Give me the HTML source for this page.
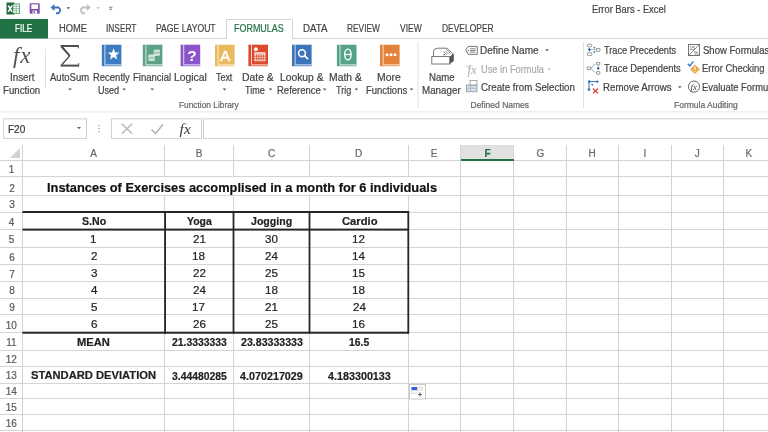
<!DOCTYPE html>
<html><head><meta charset="utf-8">
<style>
html,body{margin:0;padding:0;}
body{width:768px;height:432px;overflow:hidden;position:relative;background:#fff;filter:blur(0.35px);font-family:"Liberation Sans",sans-serif;}
.t{position:absolute;white-space:pre;line-height:1;transform-origin:0 0;-webkit-text-stroke:0.2px currentColor;}
svg{position:absolute;left:0;top:0;}
</style></head><body>
<svg width="768" height="432" viewBox="0 0 768 432">
<!-- tab row -->
<rect x="0" y="38" width="768" height="1" fill="#d4d4d4"/>
<rect x="0" y="19" width="48" height="19.5" fill="#217346"/>
<path d="M226.5 38.5 V19.5 H292.5 V38.5" fill="#fff" stroke="#d4d4d4" stroke-width="1"/>
<rect x="227" y="37" width="65" height="3" fill="#fff"/>
<!-- ribbon separators -->
<rect x="45" y="49" width="1" height="39" fill="#e1e1e1"/>
<rect x="417.5" y="42" width="1" height="66" fill="#e1e1e1"/>
<rect x="583" y="42" width="1" height="66" fill="#e1e1e1"/>
<rect x="0" y="111.4" width="768" height="1" fill="#e6e6e6"/>
<!-- formula bar -->
<rect x="3.5" y="118.8" width="83" height="19.6" fill="#fff" stroke="#d0d0d0"/>
<path d="M77 127 h4 l-2 2.2z" fill="#666"/>
<rect x="98.5" y="125" width="1.2" height="1.2" fill="#999"/><rect x="98.5" y="128" width="1.2" height="1.2" fill="#999"/><rect x="98.5" y="131" width="1.2" height="1.2" fill="#999"/>
<rect x="111.5" y="118.8" width="90" height="19.6" fill="#fff" stroke="#d0d0d0"/>
<rect x="203.5" y="118.8" width="570" height="19.6" fill="#fff" stroke="#d0d0d0"/>
<path d="M121.8 123.8 L132.2 133.8 M132.2 123.8 L121.8 133.8" stroke="#b8b8b8" stroke-width="1.5" fill="none"/>
<text x="179.6" y="134.4" font-family="Liberation Serif" font-style="italic" font-size="15.5" fill="#3a3a3a">fx</text>
<path d="M151.5 129.5 L155.5 133.5 L163 124.5" stroke="#b0b0b0" stroke-width="1.5" fill="none"/>
<!-- column header -->
<rect x="461" y="145" width="53" height="15" fill="#e1e1e1"/>
<rect x="0" y="160" width="768" height="1" fill="#d4d4d4"/>
<rect x="0" y="176" width="768" height="1" fill="#d4d4d4"/>
<rect x="0" y="195" width="768" height="1" fill="#d4d4d4"/>
<rect x="0" y="212" width="768" height="1" fill="#d4d4d4"/>
<rect x="0" y="229" width="768" height="1" fill="#d4d4d4"/>
<rect x="0" y="247" width="768" height="1" fill="#d4d4d4"/>
<rect x="0" y="264" width="768" height="1" fill="#d4d4d4"/>
<rect x="0" y="281" width="768" height="1" fill="#d4d4d4"/>
<rect x="0" y="298" width="768" height="1" fill="#d4d4d4"/>
<rect x="0" y="314" width="768" height="1" fill="#d4d4d4"/>
<rect x="0" y="332" width="768" height="1" fill="#d4d4d4"/>
<rect x="0" y="350" width="768" height="1" fill="#d4d4d4"/>
<rect x="0" y="366" width="768" height="1" fill="#d4d4d4"/>
<rect x="0" y="383" width="768" height="1" fill="#d4d4d4"/>
<rect x="0" y="398" width="768" height="1" fill="#d4d4d4"/>
<rect x="0" y="414" width="768" height="1" fill="#d4d4d4"/>
<rect x="0" y="430" width="768" height="1" fill="#d4d4d4"/>
<rect x="22" y="145" width="1" height="287" fill="#d4d4d4"/>
<rect x="164" y="145" width="1" height="32" fill="#d4d4d4"/>
<rect x="164" y="195" width="1" height="237" fill="#d4d4d4"/>
<rect x="233" y="145" width="1" height="32" fill="#d4d4d4"/>
<rect x="233" y="195" width="1" height="237" fill="#d4d4d4"/>
<rect x="309" y="145" width="1" height="32" fill="#d4d4d4"/>
<rect x="309" y="195" width="1" height="237" fill="#d4d4d4"/>
<rect x="408" y="145" width="1" height="32" fill="#d4d4d4"/>
<rect x="408" y="195" width="1" height="237" fill="#d4d4d4"/>
<rect x="460" y="145" width="1" height="287" fill="#d4d4d4"/>
<rect x="513" y="145" width="1" height="287" fill="#d4d4d4"/>
<rect x="566" y="145" width="1" height="287" fill="#d4d4d4"/>
<rect x="618" y="145" width="1" height="287" fill="#d4d4d4"/>
<rect x="671" y="145" width="1" height="287" fill="#d4d4d4"/>
<rect x="723" y="145" width="1" height="287" fill="#d4d4d4"/>
<rect x="461" y="159" width="53" height="2" fill="#217346"/>
<path d="M10 158 L20 158 L20 148 Z" fill="#d2d2d2"/>
<!-- table borders -->
<rect x="22.5" y="211" width="386.5" height="2" fill="#262626"/>
<rect x="22.5" y="228.6" width="386.5" height="2" fill="#262626"/>
<rect x="22.5" y="331.7" width="386.5" height="2" fill="#262626"/>
<rect x="164.2" y="211" width="1.8" height="122.7" fill="#262626"/>
<rect x="232.6" y="211" width="1.8" height="122.7" fill="#262626"/>
<rect x="308.6" y="211" width="1.8" height="122.7" fill="#262626"/>
<rect x="407.4" y="211" width="1.8" height="122.7" fill="#262626"/>

<!-- QAT -->
<rect x="6.5" y="2.5" width="8" height="12" fill="#1d6b3a"/>
<rect x="13" y="4" width="6.5" height="9.5" fill="#fff" stroke="#3f8a5a" stroke-width="0.8"/>
<path d="M13 6.3h6.5M13 8.6h6.5M13 10.9h6.5M16.2 4v9.5" stroke="#6aa882" stroke-width="0.7"/>
<path d="M8.2 5.5 L12.2 11.8 M12.2 5.5 L8.2 11.8" stroke="#fff" stroke-width="1.5"/>
<rect x="29.7" y="3.2" width="10" height="10.5" rx="0.8" fill="#7e4fb0"/>
<rect x="31.3" y="4.4" width="6.8" height="4.6" fill="#fff"/>
<rect x="32.5" y="10.6" width="4.6" height="3.1" fill="#fff"/>
<rect x="33.6" y="11.2" width="1.4" height="2" fill="#7e4fb0"/>
<path d="M53 7.5 H58.5 A3.3 3.3 0 0 1 58.5 13.2 H56" fill="none" stroke="#3c74b8" stroke-width="1.9"/>
<path d="M50.5 7.5 L54.5 4 L54.5 11 Z" fill="#3c74b8"/>
<path d="M66.5 7.3 h3.6 l-1.8 2z" fill="#555"/>
<path d="M88 7.5 H82.5 A3.3 3.3 0 0 0 82.5 13.2 H85" fill="none" stroke="#c0c0c0" stroke-width="1.9"/>
<path d="M90.8 7.5 L86.8 4 L86.8 11 Z" fill="#c0c0c0"/>
<path d="M96.3 7.3 h3.4 l-1.7 1.9z" fill="#bbb"/>
<rect x="109" y="6.8" width="3.4" height="0.9" fill="#777"/>
<path d="M109 8.8 h3.4 l-1.7 1.8z" fill="#777"/>

<!-- Insert Function fx -->
<text x="13" y="63" font-family="Liberation Serif" font-style="italic" font-size="23" letter-spacing="0.8" fill="#505050">fx</text>
<!-- sigma -->
<rect x="60.6" y="45" width="18" height="2" fill="#505050"/><path d="M77.6 45 h1.2 v3.4 h-0.8 z" fill="#505050"/><rect x="60.6" y="64.6" width="18.4" height="2" fill="#505050"/><path d="M78 66.6 h1.2 v-3.6 h-0.8 z" fill="#505050"/><path d="M61.5 46.5 L69.8 55.9" stroke="#505050" stroke-width="2.1" fill="none"/><path d="M69.8 55.9 L61.5 65" stroke="#505050" stroke-width="1.4" fill="none"/>
<rect x="101.8" y="44.7" width="19.6" height="21.5" fill="#3d7cc0"/><rect x="104.39999999999999" y="44.7" width="1" height="19.7" fill="#fff" fill-opacity="0.75"/><rect x="104.39999999999999" y="64.4" width="17.0" height="1" fill="#fff" fill-opacity="0.85"/><polygon points="113.60,48.30 115.13,52.40 119.50,52.58 116.07,55.30 117.24,59.52 113.60,57.10 109.96,59.52 111.13,55.30 107.70,52.58 112.07,52.40" fill="#fff"/><rect x="142.8" y="44.7" width="19.6" height="21.5" fill="#5ba287"/><rect x="145.4" y="44.7" width="1" height="19.7" fill="#fff" fill-opacity="0.75"/><rect x="145.4" y="64.4" width="17.0" height="1" fill="#fff" fill-opacity="0.85"/><g fill="#fff" fill-opacity="0.6"><ellipse cx="151.60000000000002" cy="55.5" rx="3.4" ry="1.2"/><rect x="148.20000000000002" y="55.5" width="6.8" height="4.6"/><ellipse cx="151.60000000000002" cy="60.1" rx="3.4" ry="1.2"/>
<ellipse cx="156.8" cy="50.5" rx="3.2" ry="1.1"/><rect x="153.60000000000002" y="50.5" width="6.4" height="4.4"/><ellipse cx="156.8" cy="54.900000000000006" rx="3.2" ry="1.1"/></g>
<path d="M148.20000000000002 57.300000000000004 h6.8 M148.20000000000002 58.7 h6.8 M153.60000000000002 52.300000000000004 h6.4 M153.60000000000002 53.7 h6.4" stroke="#5ba287" stroke-width="0.5" stroke-opacity="0.6"/><rect x="180.6" y="44.7" width="19.6" height="21.5" fill="#8b55c9"/><rect x="183.2" y="44.7" width="1" height="19.7" fill="#fff" fill-opacity="0.75"/><rect x="183.2" y="64.4" width="17.0" height="1" fill="#fff" fill-opacity="0.85"/><text x="187.2" y="61.300000000000004" font-family="Liberation Sans" font-weight="bold" font-size="15.5" fill="#fff">?</text><rect x="215" y="44.7" width="19.6" height="21.5" fill="#ebb95e"/><rect x="217.6" y="44.7" width="1" height="19.7" fill="#fff" fill-opacity="0.75"/><rect x="217.6" y="64.4" width="17.0" height="1" fill="#fff" fill-opacity="0.85"/><text x="220.2" y="60.900000000000006" font-family="Liberation Sans" font-size="15" fill="#fff" stroke="#fff" stroke-width="0.5">A</text><rect x="248.4" y="44.7" width="19.6" height="21.5" fill="#db4a2b"/><rect x="251.0" y="44.7" width="1" height="19.7" fill="#fff" fill-opacity="0.75"/><rect x="251.0" y="64.4" width="17.0" height="1" fill="#fff" fill-opacity="0.85"/><circle cx="255.9" cy="49.300000000000004" r="2" fill="#fff"/><rect x="254.4" y="52.2" width="11" height="9" fill="#fff" fill-opacity="0.85"/>
<path d="M256.6 53.7 v7 M258.8 53.7 v7 M261.0 53.7 v7 M263.2 53.7 v7 M254.4 56.2 h11 M254.4 58.7 h11" stroke="#db4a2b" stroke-width="0.8"/><rect x="292" y="44.7" width="19.6" height="21.5" fill="#3c74bb"/><rect x="294.6" y="44.7" width="1" height="19.7" fill="#fff" fill-opacity="0.75"/><rect x="294.6" y="64.4" width="17.0" height="1" fill="#fff" fill-opacity="0.85"/><circle cx="302" cy="53.2" r="3.4" fill="none" stroke="#fff" stroke-width="1.6"/><path d="M304.5 55.7 L308 59.2" stroke="#fff" stroke-width="1.8"/><rect x="336.9" y="44.7" width="19.6" height="21.5" fill="#55a28a"/><rect x="339.5" y="44.7" width="1" height="19.7" fill="#fff" fill-opacity="0.75"/><rect x="339.5" y="64.4" width="17.0" height="1" fill="#fff" fill-opacity="0.85"/><ellipse cx="347.9" cy="54.5" rx="3.2" ry="5.4" fill="none" stroke="#fff" stroke-width="1.4"/><path d="M344.7 54.5 h6.4" stroke="#fff" stroke-width="1.2"/><rect x="380" y="44.7" width="19.6" height="21.5" fill="#e5823a"/><rect x="382.6" y="44.7" width="1" height="19.7" fill="#fff" fill-opacity="0.75"/><rect x="382.6" y="64.4" width="17.0" height="1" fill="#fff" fill-opacity="0.85"/><circle cx="387" cy="54.7" r="1.5" fill="#fff"/><circle cx="391" cy="54.7" r="1.5" fill="#fff"/><circle cx="395" cy="54.7" r="1.5" fill="#fff"/><path d="M68.2 88.6 h3.6 l-1.8 2 z" fill="#555"/><path d="M122.3 88.6 h3.6 l-1.8 2 z" fill="#555"/><path d="M150.39999999999998 88.6 h3.6 l-1.8 2 z" fill="#555"/><path d="M188.5 88.6 h3.6 l-1.8 2 z" fill="#555"/><path d="M222.7 88.6 h3.6 l-1.8 2 z" fill="#555"/><path d="M268.7 88.4 h3.6 l-1.8 2 z" fill="#555"/><path d="M322.8 88.4 h3.6 l-1.8 2 z" fill="#555"/><path d="M354.59999999999997 88.4 h3.6 l-1.8 2 z" fill="#555"/><path d="M409.7 88.4 h3.6 l-1.8 2 z" fill="#555"/><path d="M545.2 49.2 h3.6 l-1.8 2 z" fill="#555"/><path d="M547.5 68.4 h3.6 l-1.8 2 z" fill="#bbb"/><path d="M678.0 86.3 h3.6 l-1.8 2 z" fill="#555"/><path d="M433.5 56.5 V51.5 Q434 48.2 437.5 48.2 H447 L452.5 53.5 V56" fill="#fff" stroke="#666" stroke-width="0.9"/>
<path d="M446.5 49.5 l4 4 M445 50.5 l4 4 M443.5 51.5 l3.5 3.5" stroke="#777" stroke-width="0.8"/>
<circle cx="444.2" cy="54.8" r="0.8" fill="#666"/>
<rect x="431.8" y="56.6" width="18" height="7.4" fill="#fff" stroke="#666" stroke-width="0.9"/>
<path d="M449.8 56.6 L453.8 53.4 V61 L449.8 64 Z" fill="#555"/><path d="M465.7 49.8 l2.6 -3.4 h9 v8 h-9 z" fill="#fff" stroke="#666" stroke-width="0.9"/>
<path d="M470 48.8 h5.5 M470 50.5 h5.5 M470 52.2 h5.5" stroke="#666" stroke-width="0.8"/><circle cx="468.2" cy="50.4" r="0.7" fill="#666"/><text x="467.5" y="74" font-family="Liberation Serif" font-style="italic" font-size="12.5" fill="#aaaaaa">fx</text><path d="M466 65.5 l2.5 2 l1.5 -2.5" fill="none" stroke="#b5b5b5" stroke-width="0.9"/><rect x="466.5" y="85" width="10.5" height="6.8" fill="#d5deec" stroke="#8a8a8a" stroke-width="0.7"/>
<path d="M466.5 88.3 h10.5 M470.5 85 v6.8" stroke="#a0a8b8" stroke-width="0.6"/>
<rect x="470" y="80.6" width="7" height="4.4" fill="#fff" stroke="#8a8a8a" stroke-width="0.7"/><g fill="#fff" stroke="#777" stroke-width="0.8">
<rect x="587.4" y="44.2" width="4.4" height="2.6" rx="1"/><rect x="587.4" y="52.8" width="4.4" height="2.8" rx="1"/><rect x="596.3" y="48.4" width="3.6" height="2.9" rx="0.6"/></g>
<path d="M589.4 47.8 l1.6 1.8 l-1.6 1.8 l-1.6 -1.8 z" fill="#3f5fb0"/>
<circle cx="594.4" cy="47.6" r="0.9" fill="#4a7d8a"/><circle cx="594.4" cy="52" r="0.9" fill="#4a7d8a"/>
<path d="M591 49.6 h5" stroke="#7aa6c8" stroke-width="0.7"/><g fill="#fff" stroke="#777" stroke-width="0.8">
<rect x="587.3" y="67" width="3.4" height="2.6" rx="0.6"/><rect x="596.6" y="62.4" width="3.2" height="2.6" rx="0.5"/><rect x="596.6" y="71.6" width="3.2" height="2.6" rx="0.5"/></g>
<path d="M590.8 68.3 L595 64 M590.8 68.3 L595 72.6" stroke="#7b8fc8" stroke-width="0.8"/>
<path d="M598.2 66.4 l1.5 1.8 l-1.5 1.8 l-1.5 -1.8 z" fill="#3f5fb0"/><circle cx="589.2" cy="81.6" r="1.3" fill="#3a6fc0"/><circle cx="597.3" cy="81.6" r="1.2" fill="#3a6fc0"/>
<path d="M589.2 81.6 h8" stroke="#3a6fc0" stroke-width="1"/>
<circle cx="589" cy="89.6" r="1.3" fill="#3a6fc0"/><path d="M589 81.6 v8" stroke="#3a6fc0" stroke-width="1"/>
<path d="M591.5 84 l1.5 1.5" stroke="#3a6fc0" stroke-width="1.1"/>
<path d="M593 88.5 l5 4.8 M598 88.5 l-5 4.8" stroke="#e0433a" stroke-width="1.2"/><rect x="688.5" y="44.5" width="11" height="11" fill="#fff" stroke="#666" stroke-width="0.9"/>
<path d="M688.5 55.5 l11 -11" stroke="#666" stroke-width="0.8"/>
<text x="689.6" y="50.3" font-family="Liberation Sans" font-size="5" fill="#555">15</text><text x="694" y="54.8" font-family="Liberation Sans" font-size="5" fill="#555">%</text><path d="M687.8 63.8 l2 2.2 l3.6 -4.6" fill="none" stroke="#3a6fc0" stroke-width="1.3"/>
<path d="M695 64.5 l4.8 4.7 l-4.8 4.7 l-4.8 -4.7 z" fill="#eda645"/>
<path d="M695 66.5 v3.6" stroke="#fff" stroke-width="1.2"/><circle cx="695" cy="71.6" r="0.7" fill="#fff"/><circle cx="694" cy="86.6" r="5.6" fill="#fff" stroke="#555" stroke-width="0.9"/>
<text x="690.6" y="90" font-family="Liberation Serif" font-style="italic" font-size="9" fill="#444">fx</text>
<!-- quick analysis -->
<rect x="409.5" y="384.5" width="16" height="14.5" fill="#fff" stroke="#c8c8c8"/>
<rect x="411.5" y="387" width="5.5" height="3.2" fill="#2d5fe0"/>
<rect x="417.5" y="387" width="5" height="3.2" fill="#f4f0d8" stroke="#ccc" stroke-width="0.5"/>
<rect x="411.5" y="390.5" width="5.5" height="3.2" fill="#f4f4ff" stroke="#ccc" stroke-width="0.5"/>
<path d="M418 394.5 h4 M420 392.5 v4" stroke="#666" stroke-width="1.2"/>
</svg>
<div class="t" style="left:592.07px;top:5.13px;font-size:10px;font-weight:normal;color:#444;transform:scaleX(0.9346);">Error Bars - Excel</div>
<div class="t" style="left:14.79px;top:24.04px;font-size:10px;font-weight:normal;color:#ffffff;transform:scaleX(0.8150);">FILE</div>
<div class="t" style="left:58.67px;top:24.04px;font-size:10px;font-weight:normal;color:#444;transform:scaleX(0.9310);">HOME</div>
<div class="t" style="left:106.17px;top:24.04px;font-size:10px;font-weight:normal;color:#444;transform:scaleX(0.8333);">INSERT</div>
<div class="t" style="left:155.94px;top:24.04px;font-size:10px;font-weight:normal;color:#444;transform:scaleX(0.8632);">PAGE LAYOUT</div>
<div class="t" style="left:233.85px;top:24.04px;font-size:10px;font-weight:normal;color:#217346;transform:scaleX(0.8955);">FORMULAS</div>
<div class="t" style="left:303.03px;top:24.04px;font-size:10px;font-weight:normal;color:#444;transform:scaleX(0.9708);">DATA</div>
<div class="t" style="left:347.17px;top:24.04px;font-size:10px;font-weight:normal;color:#444;transform:scaleX(0.8333);">REVIEW</div>
<div class="t" style="left:400.00px;top:24.04px;font-size:10px;font-weight:normal;color:#444;transform:scaleX(0.8462);">VIEW</div>
<div class="t" style="left:442.45px;top:24.04px;font-size:10px;font-weight:normal;color:#444;transform:scaleX(0.8450);">DEVELOPER</div>
<div class="t" style="left:9.92px;top:72.63px;font-size:10px;font-weight:normal;color:#444;transform:scaleX(0.9792);">Insert</div>
<div class="t" style="left:3.33px;top:85.53px;font-size:10px;font-weight:normal;color:#444;transform:scaleX(0.9703);">Function</div>
<div class="t" style="left:50.30px;top:72.63px;font-size:10px;font-weight:normal;color:#444;transform:scaleX(0.9512);">AutoSum</div>
<div class="t" style="left:92.65px;top:72.63px;font-size:10px;font-weight:normal;color:#444;transform:scaleX(0.9474);">Recently</div>
<div class="t" style="left:98.00px;top:85.53px;font-size:10px;font-weight:normal;color:#444;transform:scaleX(0.9043);">Used</div>
<div class="t" style="left:132.55px;top:72.63px;font-size:10px;font-weight:normal;color:#444;transform:scaleX(0.9513);">Financial</div>
<div class="t" style="left:173.76px;top:72.63px;font-size:10px;font-weight:normal;color:#444;transform:scaleX(1.0367);">Logical</div>
<div class="t" style="left:216.00px;top:72.63px;font-size:10px;font-weight:normal;color:#444;transform:scaleX(0.8895);">Text</div>
<div class="t" style="left:241.76px;top:72.63px;font-size:10px;font-weight:normal;color:#444;transform:scaleX(1.0400);">Date &amp;</div>
<div class="t" style="left:245.30px;top:85.53px;font-size:10px;font-weight:normal;color:#444;transform:scaleX(0.9045);">Time</div>
<div class="t" style="left:279.97px;top:72.63px;font-size:10px;font-weight:normal;color:#444;transform:scaleX(1.0293);">Lookup &amp;</div>
<div class="t" style="left:277.15px;top:85.53px;font-size:10px;font-weight:normal;color:#444;transform:scaleX(0.9511);">Reference</div>
<div class="t" style="left:329.16px;top:72.63px;font-size:10px;font-weight:normal;color:#444;transform:scaleX(1.0355);">Math &amp;</div>
<div class="t" style="left:336.40px;top:85.53px;font-size:10px;font-weight:normal;color:#444;transform:scaleX(0.9000);">Trig</div>
<div class="t" style="left:377.26px;top:72.63px;font-size:10px;font-weight:normal;color:#444;transform:scaleX(1.0409);">More</div>
<div class="t" style="left:365.95px;top:85.53px;font-size:10px;font-weight:normal;color:#444;transform:scaleX(0.9500);">Functions</div>
<div class="t" style="left:429.04px;top:72.63px;font-size:10px;font-weight:normal;color:#444;transform:scaleX(0.9615);">Name</div>
<div class="t" style="left:421.92px;top:85.53px;font-size:10px;font-weight:normal;color:#444;transform:scaleX(0.9795);">Manager</div>
<div class="t" style="left:479.79px;top:46.14px;font-size:10px;font-weight:normal;color:#444;transform:scaleX(1.0053);">Define Name</div>
<div class="t" style="left:480.80px;top:64.53px;font-size:10px;font-weight:normal;color:#aaaaaa;transform:scaleX(0.9294);">Use in Formula</div>
<div class="t" style="left:480.80px;top:82.83px;font-size:10px;font-weight:normal;color:#444;transform:scaleX(0.9711);">Create from Selection</div>
<div class="t" style="left:603.50px;top:46.14px;font-size:10px;font-weight:normal;color:#444;transform:scaleX(0.9179);">Trace Precedents</div>
<div class="t" style="left:603.50px;top:64.44px;font-size:10px;font-weight:normal;color:#444;transform:scaleX(0.9366);">Trace Dependents</div>
<div class="t" style="left:602.53px;top:82.63px;font-size:10px;font-weight:normal;color:#444;transform:scaleX(0.9710);">Remove Arrows</div>
<div class="t" style="left:702.50px;top:46.14px;font-size:10px;font-weight:normal;color:#444;transform:scaleX(0.9536);">Show Formulas</div>
<div class="t" style="left:701.56px;top:64.44px;font-size:10px;font-weight:normal;color:#444;transform:scaleX(0.9379);">Error Checking</div>
<div class="t" style="left:701.56px;top:82.63px;font-size:10px;font-weight:normal;color:#444;transform:scaleX(0.9380);">Evaluate Formula</div>
<div class="t" style="left:178.90px;top:100.80px;font-size:8.5px;font-weight:normal;color:#666;transform:scaleX(0.9811);">Function Library</div>
<div class="t" style="left:470.50px;top:100.80px;font-size:8.5px;font-weight:normal;color:#666;">Defined Names</div>
<div class="t" style="left:674.00px;top:100.80px;font-size:8.5px;font-weight:normal;color:#666;">Formula Auditing</div>
<div class="t" style="left:7.55px;top:123.81px;font-size:10.5px;font-weight:normal;color:#333;transform:scaleX(0.9529);">F20</div>
<div class="t" style="left:90.25px;top:148.53px;font-size:10px;font-weight:normal;color:#666;">A</div>
<div class="t" style="left:195.70px;top:148.53px;font-size:10px;font-weight:normal;color:#666;">B</div>
<div class="t" style="left:267.90px;top:148.53px;font-size:10px;font-weight:normal;color:#666;">C</div>
<div class="t" style="left:354.95px;top:148.53px;font-size:10px;font-weight:normal;color:#666;">D</div>
<div class="t" style="left:430.75px;top:148.53px;font-size:10px;font-weight:normal;color:#666;">E</div>
<div class="t" style="left:484.38px;top:148.53px;font-size:10px;font-weight:bold;color:#217346;">F</div>
<div class="t" style="left:536.38px;top:148.53px;font-size:10px;font-weight:normal;color:#666;">G</div>
<div class="t" style="left:588.38px;top:148.53px;font-size:10px;font-weight:normal;color:#666;">H</div>
<div class="t" style="left:643.50px;top:148.53px;font-size:10px;font-weight:normal;color:#666;">I</div>
<div class="t" style="left:694.75px;top:148.53px;font-size:10px;font-weight:normal;color:#666;">J</div>
<div class="t" style="left:745.38px;top:148.53px;font-size:10px;font-weight:normal;color:#666;">K</div>
<div class="t" style="left:8.70px;top:164.63px;font-size:10px;font-weight:normal;color:#5a5a5a;">1</div>
<div class="t" style="left:9.20px;top:183.73px;font-size:10px;font-weight:normal;color:#5a5a5a;">2</div>
<div class="t" style="left:9.20px;top:200.13px;font-size:10px;font-weight:normal;color:#5a5a5a;">3</div>
<div class="t" style="left:8.70px;top:217.73px;font-size:10px;font-weight:normal;color:#5a5a5a;">4</div>
<div class="t" style="left:8.70px;top:235.33px;font-size:10px;font-weight:normal;color:#5a5a5a;">5</div>
<div class="t" style="left:9.20px;top:252.53px;font-size:10px;font-weight:normal;color:#5a5a5a;">6</div>
<div class="t" style="left:9.20px;top:269.74px;font-size:10px;font-weight:normal;color:#5a5a5a;">7</div>
<div class="t" style="left:9.20px;top:286.24px;font-size:10px;font-weight:normal;color:#5a5a5a;">8</div>
<div class="t" style="left:9.20px;top:303.14px;font-size:10px;font-weight:normal;color:#5a5a5a;">9</div>
<div class="t" style="left:5.70px;top:320.64px;font-size:10px;font-weight:normal;color:#5a5a5a;">10</div>
<div class="t" style="left:6.20px;top:338.14px;font-size:10px;font-weight:normal;color:#5a5a5a;">11</div>
<div class="t" style="left:5.70px;top:354.64px;font-size:10px;font-weight:normal;color:#5a5a5a;">12</div>
<div class="t" style="left:5.70px;top:371.44px;font-size:10px;font-weight:normal;color:#5a5a5a;">13</div>
<div class="t" style="left:5.70px;top:386.74px;font-size:10px;font-weight:normal;color:#5a5a5a;">14</div>
<div class="t" style="left:5.70px;top:402.64px;font-size:10px;font-weight:normal;color:#5a5a5a;">15</div>
<div class="t" style="left:5.70px;top:418.64px;font-size:10px;font-weight:normal;color:#5a5a5a;">16</div>
<div class="t" style="left:81.60px;top:216.39px;font-size:11px;font-weight:bold;color:#222;transform:scaleX(0.9640);">S.No</div>
<div class="t" style="left:186.60px;top:216.39px;font-size:11px;font-weight:bold;color:#222;transform:scaleX(0.9519);">Yoga</div>
<div class="t" style="left:251.25px;top:216.39px;font-size:11px;font-weight:bold;color:#222;transform:scaleX(0.9607);">Jogging</div>
<div class="t" style="left:341.90px;top:216.39px;font-size:11px;font-weight:bold;color:#222;transform:scaleX(1.0200);">Cardio</div>
<div class="t" style="left:90.04px;top:234.09px;font-size:11px;font-weight:normal;color:#222;transform:scaleX(1.0600);">1</div>
<div class="t" style="left:192.84px;top:234.09px;font-size:11px;font-weight:normal;color:#222;transform:scaleX(1.0600);">21</div>
<div class="t" style="left:265.04px;top:234.09px;font-size:11px;font-weight:normal;color:#222;transform:scaleX(1.0600);">30</div>
<div class="t" style="left:352.06px;top:234.09px;font-size:11px;font-weight:normal;color:#222;transform:scaleX(1.0600);">12</div>
<div class="t" style="left:90.57px;top:251.29px;font-size:11px;font-weight:normal;color:#222;transform:scaleX(1.0600);">2</div>
<div class="t" style="left:192.31px;top:251.29px;font-size:11px;font-weight:normal;color:#222;transform:scaleX(1.0600);">18</div>
<div class="t" style="left:265.04px;top:251.29px;font-size:11px;font-weight:normal;color:#222;transform:scaleX(1.0600);">24</div>
<div class="t" style="left:352.06px;top:251.29px;font-size:11px;font-weight:normal;color:#222;transform:scaleX(1.0600);">14</div>
<div class="t" style="left:90.57px;top:268.49px;font-size:11px;font-weight:normal;color:#222;transform:scaleX(1.0600);">3</div>
<div class="t" style="left:192.84px;top:268.49px;font-size:11px;font-weight:normal;color:#222;transform:scaleX(1.0600);">22</div>
<div class="t" style="left:265.04px;top:268.49px;font-size:11px;font-weight:normal;color:#222;transform:scaleX(1.0600);">25</div>
<div class="t" style="left:352.06px;top:268.49px;font-size:11px;font-weight:normal;color:#222;transform:scaleX(1.0600);">15</div>
<div class="t" style="left:90.57px;top:284.99px;font-size:11px;font-weight:normal;color:#222;transform:scaleX(1.0600);">4</div>
<div class="t" style="left:192.84px;top:284.99px;font-size:11px;font-weight:normal;color:#222;transform:scaleX(1.0600);">24</div>
<div class="t" style="left:264.51px;top:284.99px;font-size:11px;font-weight:normal;color:#222;transform:scaleX(1.0600);">18</div>
<div class="t" style="left:352.06px;top:284.99px;font-size:11px;font-weight:normal;color:#222;transform:scaleX(1.0600);">18</div>
<div class="t" style="left:90.57px;top:301.89px;font-size:11px;font-weight:normal;color:#222;transform:scaleX(1.0600);">5</div>
<div class="t" style="left:192.31px;top:301.89px;font-size:11px;font-weight:normal;color:#222;transform:scaleX(1.0600);">17</div>
<div class="t" style="left:265.04px;top:301.89px;font-size:11px;font-weight:normal;color:#222;transform:scaleX(1.0600);">21</div>
<div class="t" style="left:352.59px;top:301.89px;font-size:11px;font-weight:normal;color:#222;transform:scaleX(1.0600);">24</div>
<div class="t" style="left:90.57px;top:319.39px;font-size:11px;font-weight:normal;color:#222;transform:scaleX(1.0600);">6</div>
<div class="t" style="left:192.84px;top:319.39px;font-size:11px;font-weight:normal;color:#222;transform:scaleX(1.0600);">26</div>
<div class="t" style="left:265.04px;top:319.39px;font-size:11px;font-weight:normal;color:#222;transform:scaleX(1.0600);">25</div>
<div class="t" style="left:352.06px;top:319.39px;font-size:11px;font-weight:normal;color:#222;transform:scaleX(1.0600);">16</div>
<div class="t" style="left:77.30px;top:337.09px;font-size:11px;font-weight:bold;color:#222;transform:scaleX(1.0156);">MEAN</div>
<div class="t" style="left:31.00px;top:370.39px;font-size:11px;font-weight:bold;color:#222;transform:scaleX(1.0163);">STANDARD DEVIATION</div>
<div class="t" style="left:171.90px;top:337.41px;font-size:10.5px;font-weight:bold;color:#222;transform:scaleX(0.9875);">21.3333333</div>
<div class="t" style="left:240.60px;top:337.41px;font-size:10.5px;font-weight:bold;color:#222;transform:scaleX(1.0098);">23.83333333</div>
<div class="t" style="left:349.00px;top:337.41px;font-size:10.5px;font-weight:bold;color:#222;transform:scaleX(0.9875);">16.5</div>
<div class="t" style="left:171.90px;top:370.61px;font-size:10.5px;font-weight:bold;color:#222;transform:scaleX(0.9875);">3.44480285</div>
<div class="t" style="left:239.70px;top:370.61px;font-size:10.5px;font-weight:bold;color:#222;transform:scaleX(1.0246);">4.070217029</div>
<div class="t" style="left:328.10px;top:370.61px;font-size:10.5px;font-weight:bold;color:#222;transform:scaleX(1.0246);">4.183300133</div>
<div class="t" style="left:47.06px;top:180.89px;font-size:13.6px;font-weight:bold;color:#111;transform:scaleX(0.9439);">Instances of Exercises accomplised in a month for 6 individuals</div>
</body></html>
